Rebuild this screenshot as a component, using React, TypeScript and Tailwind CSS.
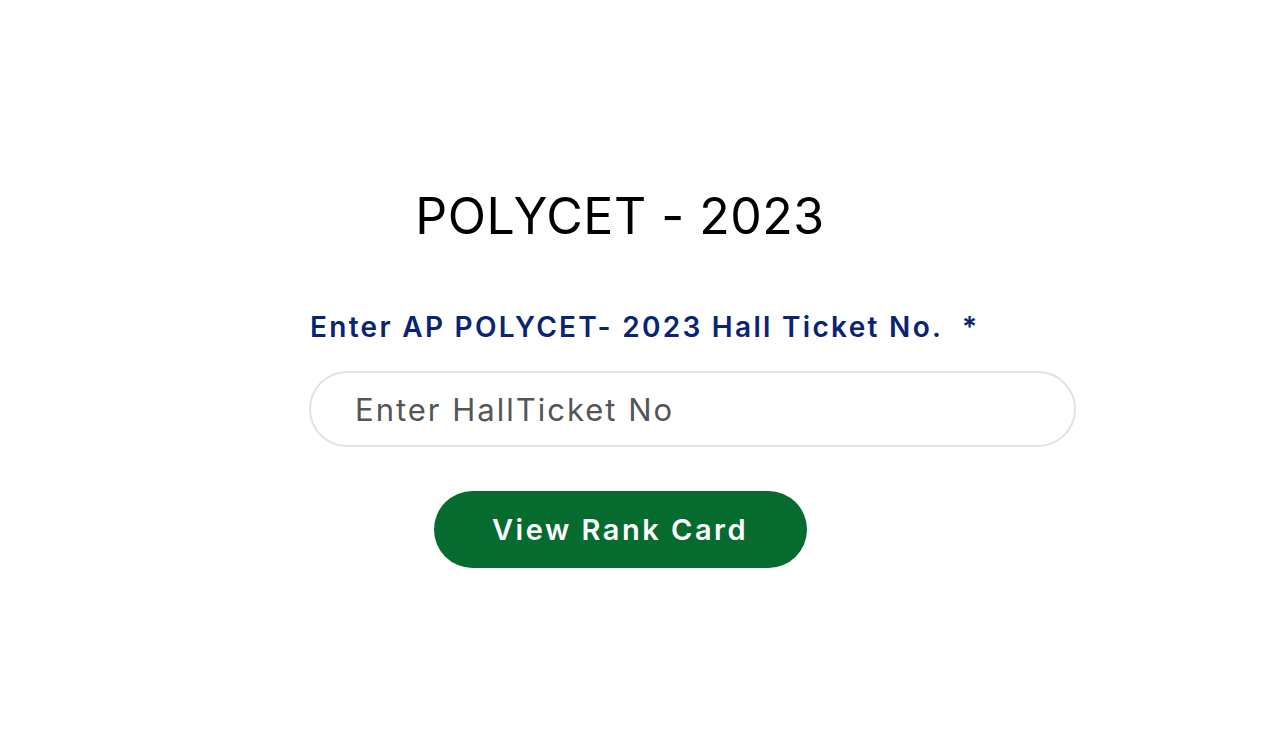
export default function App() {
    return (
        <div className="min-h-[750px] w-full bg-white pt-[183px] font-['Inter',sans-serif]">
            {/* Title */}
            <h1 className="w-[1240px] text-center text-[50px] font-normal leading-[66px] tracking-[0.5px] text-black">
                POLYCET - 2023
            </h1>

            {/* Form */}
            <div className="ml-[309px] mt-[58px] w-[767px]">
                <label className="block pl-[1px] text-[28px] font-semibold leading-[40px] tracking-[2.3px] text-[#0b2373]">
                    Enter AP POLYCET- 2023 Hall Ticket No.&nbsp;&nbsp;*
                </label>
                <input
                    type="text"
                    placeholder="Enter HallTicket No"
                    className="mt-[24px] h-[76px] w-full rounded-full border-2 border-[#e2e2e2] bg-white px-[44px] text-[31px] tracking-[2px] text-[#444] placeholder:text-[#555] outline-none"
                />
            </div>

            {/* Action */}
            <div className="mt-[44px] flex w-[1240px] justify-center">
                <button className="h-[77px] w-[373px] rounded-full bg-[#066b2e] text-[29px] font-semibold tracking-[2.5px] text-white">
                    View Rank Card
                </button>
            </div>
        </div>
    )
}
